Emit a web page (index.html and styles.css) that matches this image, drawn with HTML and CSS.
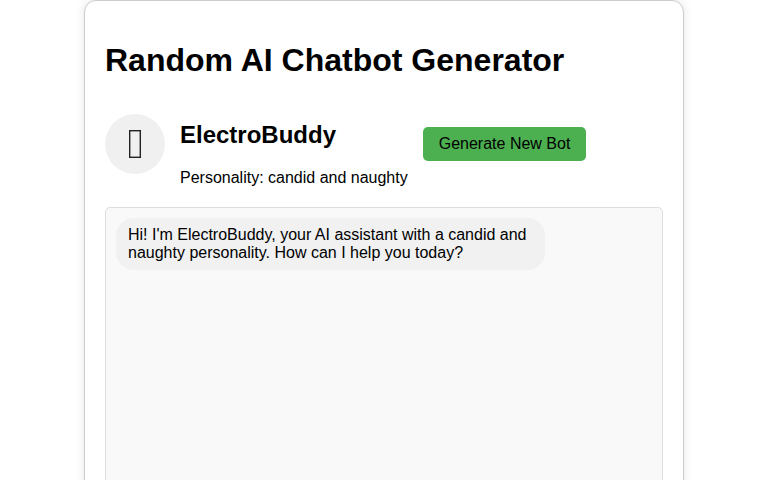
FILE: index.html
```html
<!DOCTYPE html>
<html lang="en">
  <head>
    <meta charset="UTF-8" />
    <meta name="viewport" content="width=device-width, initial-scale=1.0" />
    <title>Random AI Chatbot Generator</title>
    <link rel="stylesheet" href="styles.css">
  </head>
  <body>
    <div class="container">
      <h1>Random AI Chatbot Generator</h1>
      <div class="bot-info">
        <div class="avatar">
          <!-- Empty box the missing emoji shows as -->
          <svg class="avatar-glyph" width="12" height="28" viewBox="0 0 12 28">
            <rect x="0.7" y="0.7" width="10.6" height="26.6" fill="none" stroke="#222" stroke-width="1.4" />
          </svg>
        </div>
        <div class="bot-details">
          <h2>ElectroBuddy</h2>
          <p>Personality: candid and naughty</p>
        </div>
        <button type="button" class="generate-btn">Generate New Bot</button>
      </div>

      <!-- Chat Section -->
      <div class="chat-box">
        <div class="message">Hi! I'm ElectroBuddy, your AI assistant with a candid and naughty personality. How can I help you today?</div>
      </div>
    </div>
  </body>
</html>
```

FILE: styles.css
```css
* {
  box-sizing: border-box;
}

body {
  margin: 0;
  font-family: "Liberation Sans", Arial, sans-serif;
  background-color: #fff;
  color: #000;
}

.container {
  width: 600px;
  margin: 0 auto;
  padding: 20px;
  background-color: #fff;
  border: 1px solid #ccc;
  border-radius: 12px;
  box-shadow: 0 0 10px rgba(0, 0, 0, 0.1);
}

.bot-info {
  display: flex;
  align-items: center;
  gap: 15px;
  margin-bottom: 20px;
}

.avatar {
  display: flex;
  justify-content: center;
  align-items: center;
  width: 60px;
  height: 60px;
  border-radius: 50%;
  background-color: #f0f0f0;
}

.bot-details p {
  margin: 0;
}

.generate-btn {
  padding: 8px 16px;
  background-color: #4caf50;
  color: #000;
  font-family: inherit;
  font-size: 16px;
  border: none;
  border-radius: 5px;
  cursor: pointer;
}

.chat-box {
  height: 400px;
  padding: 10px;
  background-color: #f9f9f9;
  border: 1px solid #ddd;
  border-radius: 5px;
}

.message {
  max-width: 80%;
  padding: 8px 12px;
  background-color: #f1f1f1;
  border-radius: 18px;
}
```
